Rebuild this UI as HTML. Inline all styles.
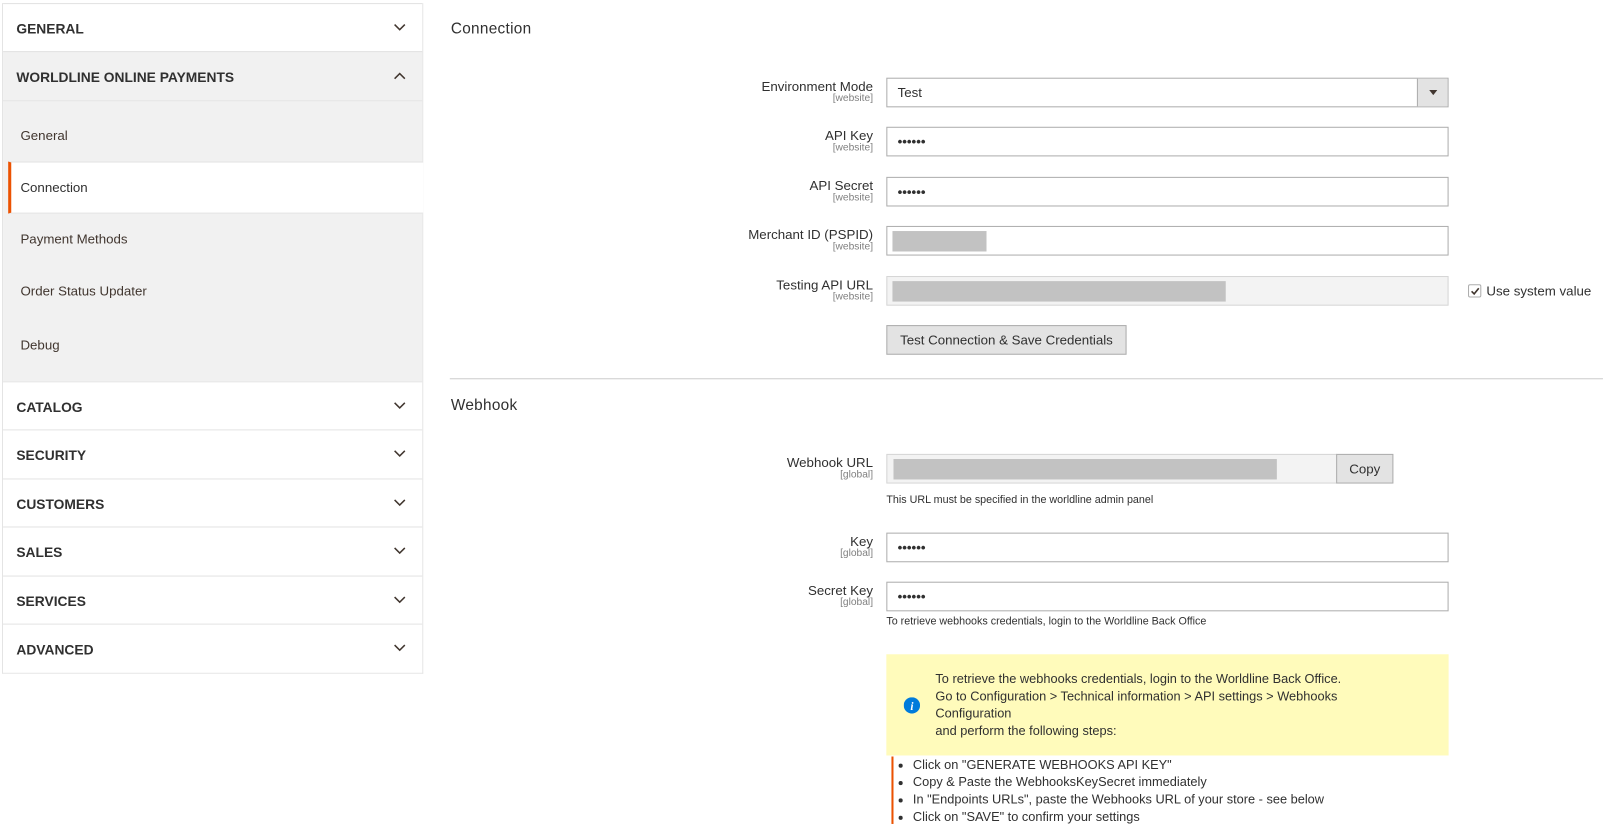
<!DOCTYPE html>
<html><head><style>
*{box-sizing:border-box;margin:0;padding:0}
body{width:1603px;height:837px;background:#fff;font-family:"Liberation Sans",sans-serif;color:#303030;position:relative;overflow:hidden}
#w{position:absolute;left:0;top:0;width:1568px;height:819px;transform:scale(1.0223);transform-origin:0 0}
.a{position:absolute}
.sb{left:2px;width:412px;border:1px solid #e3e3e3;border-top:none}
.h{height:47px;border-top:1px solid #e3e3e3;font-weight:bold;font-size:13.5px;color:#303030;padding:17px 0 0 13px;position:relative;background:#fff}
.h svg{position:absolute;right:16px;top:19px}
.sub{background:#f1f1f1;border-top:1px solid #e3e3e3}
.si{height:51px;font-size:13px;padding:20px 0 0 17px;color:#41362f}
.lbl{right:714px;text-align:right;font-size:13px;color:#303030;line-height:15px}
.lbl small{display:block;font-size:10px;color:#808080;line-height:10px}
.in{left:867px;width:550px;height:29px;border:1px solid #adadad;background:#fff;font-size:13px;padding:6px 10px}
.dots{font-size:13px;font-weight:bold;line-height:15px}
.bar{position:absolute;background:#c2c2c2;height:20px;top:4px;left:5px}
.note{left:867px;font-size:10.5px;color:#303030}
</style></head><body><div id="w">
<div class="a sb" style="top:3px">
<div class="h">GENERAL<svg width="12" height="8" viewBox="0 0 12 8"><path d="M1 1l5 5 5-5" stroke="#41362f" stroke-width="1.5" fill="none"/></svg></div>
<div class="h" style="background:#f1f1f1;height:48px">WORLDLINE ONLINE PAYMENTS<svg width="12" height="8" viewBox="0 0 12 8"><path d="M1 7l5-5 5 5" stroke="#41362f" stroke-width="1.5" fill="none"/></svg></div>
<div class="sub">
<div class="si" style="height:59px;padding-top:26px">General</div>
<div class="si" style="background:#fff;border-left:3px solid #eb5202;margin-left:5px;padding-left:9px;border-top:1px solid #e3e3e3;border-bottom:1px solid #e3e3e3;margin-right:-1px;color:#303030;padding-top:17px">Connection</div>
<div class="si" style="padding-top:17px">Payment Methods</div>
<div class="si" style="height:52px;padding-top:17px">Order Status Updater</div>
<div class="si" style="height:61px;padding-top:18px">Debug</div>
</div>
<div class="h">CATALOG<svg width="12" height="8" viewBox="0 0 12 8"><path d="M1 1l5 5 5-5" stroke="#41362f" stroke-width="1.5" fill="none"/></svg></div>
<div class="h" style="height:48px">SECURITY<svg width="12" height="8" viewBox="0 0 12 8"><path d="M1 1l5 5 5-5" stroke="#41362f" stroke-width="1.5" fill="none"/></svg></div>
<div class="h">CUSTOMERS<svg width="12" height="8" viewBox="0 0 12 8"><path d="M1 1l5 5 5-5" stroke="#41362f" stroke-width="1.5" fill="none"/></svg></div>
<div class="h" style="height:48px">SALES<svg width="12" height="8" viewBox="0 0 12 8"><path d="M1 1l5 5 5-5" stroke="#41362f" stroke-width="1.5" fill="none"/></svg></div>
<div class="h">SERVICES<svg width="12" height="8" viewBox="0 0 12 8"><path d="M1 1l5 5 5-5" stroke="#41362f" stroke-width="1.5" fill="none"/></svg></div>
<div class="h" style="height:48px">ADVANCED<svg width="12" height="8" viewBox="0 0 12 8"><path d="M1 1l5 5 5-5" stroke="#41362f" stroke-width="1.5" fill="none"/></svg></div>
</div>

<div class="a" style="left:441px;top:20px;font-size:15px;letter-spacing:.3px">Connection</div>

<div class="a lbl" style="top:77px">Environment Mode<small>[website]</small></div>
<div class="a in" style="top:76px">Test<div class="a" style="right:0;top:0;width:30px;height:27px;background:#e3e3e3;border-left:1px solid #adadad"><svg class="a" style="left:11px;top:11px" width="8" height="5"><path d="M0 0h8L4 5z" fill="#41362f"/></svg></div></div>

<div class="a lbl" style="top:125px">API Key<small>[website]</small></div>
<div class="a in dots" style="top:124px">••••••</div>
<div class="a lbl" style="top:174px">API Secret<small>[website]</small></div>
<div class="a in dots" style="top:173px">••••••</div>
<div class="a lbl" style="top:222px">Merchant ID (PSPID)<small>[website]</small></div>
<div class="a in" style="top:221px"><div class="bar" style="width:92px"></div></div>
<div class="a lbl" style="top:271px">Testing API URL<small>[website]</small></div>
<div class="a in" style="top:270px;background:#f3f3f3;border-color:#d6d6d6"><div class="bar" style="width:326px"></div></div>
<div class="a" style="left:1436px;top:278px;width:13px;height:13px;border:1px solid #adadad;border-radius:2px;background:#fff"><svg class="a" style="left:1px;top:1px" width="10" height="10"><path d="M1.5 5l2.5 2.5L8.5 2" stroke="#41362f" stroke-width="1.6" fill="none"/></svg></div>
<div class="a" style="left:1454px;top:277px;font-size:13px">Use system value</div>

<div class="a" style="left:867px;top:318px;width:235px;height:29px;background:#e3e3e3;border:1px solid #adadad;font-size:13px;text-align:center;padding-top:6px">Test Connection &amp; Save Credentials</div>

<div class="a" style="left:440px;top:370px;width:1128px;height:1px;background:#cccccc"></div>

<div class="a" style="left:441px;top:388px;font-size:15px;letter-spacing:.3px">Webhook</div>

<div class="a lbl" style="top:445px">Webhook URL<small>[global]</small></div>
<div class="a in" style="top:444px;width:441px;background:#f3f3f3;border-color:#d6d6d6"><div class="bar" style="width:375px;left:6px"></div></div>
<div class="a" style="left:1307px;top:444px;width:56px;height:29px;background:#e3e3e3;border:1px solid #adadad;font-size:13px;text-align:center;padding-top:6px">Copy</div>
<div class="a note" style="top:483px">This URL must be specified in the worldline admin panel</div>

<div class="a lbl" style="top:522px">Key<small>[global]</small></div>
<div class="a in dots" style="top:521px">••••••</div>
<div class="a lbl" style="top:570px">Secret Key<small>[global]</small></div>
<div class="a in dots" style="top:569px">••••••</div>
<div class="a note" style="top:602px">To retrieve webhooks credentials, login to the Worldline Back Office</div>

<div class="a" style="left:867px;top:640px;width:550px;height:99px;background:#fffbbb;font-size:12.5px;line-height:17px;padding:16px 0 0 48px;color:#303030">
<svg class="a" style="left:17px;top:42px" width="16" height="16"><circle cx="8" cy="8" r="8" fill="#007bdb"/><text x="8" y="12.5" font-size="11" font-weight="bold" font-style="italic" fill="#fff" text-anchor="middle" font-family="Liberation Serif,serif">i</text></svg>
To retrieve the webhooks credentials, login to the Worldline Back Office.<br>Go to Configuration &gt; Technical information &gt; API settings &gt; Webhooks<br>Configuration<br>and perform the following steps:</div>
<div class="a" style="left:872px;top:740px;width:2px;height:66px;background:#eb5202"></div>
<ul class="a" style="left:893px;top:740px;font-size:12.5px;line-height:17px;list-style:disc">
<li>Click on "GENERATE WEBHOOKS API KEY"</li>
<li>Copy &amp; Paste the WebhooksKeySecret immediately</li>
<li>In "Endpoints URLs", paste the Webhooks URL of your store - see below</li>
<li>Click on "SAVE" to confirm your settings</li>
</ul>
</div></body></html>
